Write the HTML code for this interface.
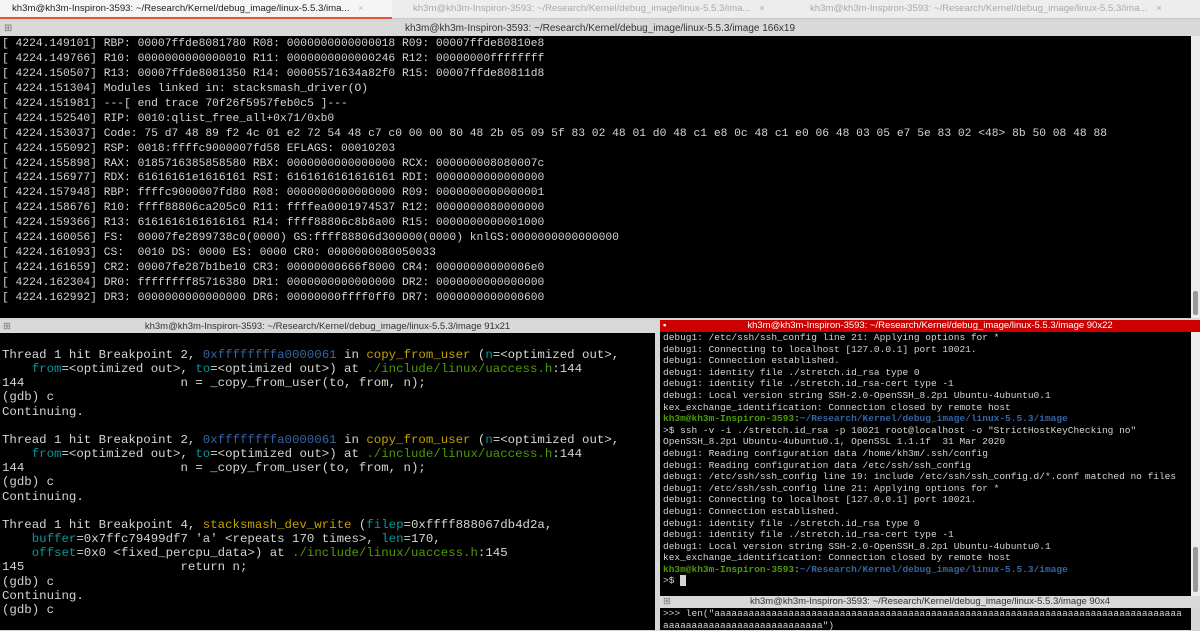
<!DOCTYPE html>
<html><head><meta charset="utf-8"><style>
*{margin:0;padding:0;box-sizing:border-box}
body{width:1200px;height:630px;overflow:hidden;background:#d6d6d6;font-family:"Liberation Sans",sans-serif;position:relative}
.abs{position:absolute}
pre{font-family:"Liberation Mono","DejaVu Sans Mono",monospace;white-space:pre;color:#d3d7cf}
.top div{height:14.95px;line-height:14.95px}
.tabs{left:0;top:0;width:1200px;height:19px;background:#ededed;border-bottom:1px solid #c8c8c8}
.tab{position:absolute;top:0;height:19px;font-size:9.6px;line-height:18px;color:#aaa;white-space:nowrap;overflow:hidden}
.title{font-size:10px;color:#333;text-align:center;line-height:15px;white-space:nowrap}
.b{color:#3465a4}.y{color:#c4a000}.g{color:#4e9a06}.c{color:#06989a}.gb{color:#4e9a06;font-weight:bold}.bb{color:#3465a4;font-weight:bold}
</style></head><body>
<div class="abs tabs">
<div class="tab" style="left:0;width:392px;background:#f5f5f5;color:#222;padding-left:12px;border-bottom:2px solid #e0593a">kh3m@kh3m-Inspiron-3593: ~/Research/Kernel/debug_image/linux-5.5.3/ima... <span style="color:#bbb;margin-left:6px">×</span></div>
<div class="tab" style="left:405px;width:390px;padding-left:8px">kh3m@kh3m-Inspiron-3593: ~/Research/Kernel/debug_image/linux-5.5.3/ima... <span style="margin-left:6px">×</span></div>
<div class="tab" style="left:800px;width:400px;padding-left:10px">kh3m@kh3m-Inspiron-3593: ~/Research/Kernel/debug_image/linux-5.5.3/ima... <span style="margin-left:6px">×</span></div>
</div>
<div class="abs title" style="left:0;top:21px;width:1200px;height:15px;background:#d9d9d9"><span style="position:absolute;left:4px;color:#777">⊞</span>kh3m@kh3m-Inspiron-3593: ~/Research/Kernel/debug_image/linux-5.5.3/image 166x19</div>
<div class="abs" style="left:0;top:36px;width:1191px;height:282px;background:#000"></div>
<div class="abs" style="left:1191px;top:36px;width:9px;height:282px;background:#ececec"><div style="position:absolute;left:2px;top:255px;width:5px;height:24px;background:#999;border-radius:2px"></div></div>
<pre class="abs top" style="left:2px;top:37px;font-size:11.3px"><div>[ 4224.149101] RBP: 00007ffde8081780 R08: 0000000000000018 R09: 00007ffde80810e8</div><div>[ 4224.149766] R10: 0000000000000010 R11: 0000000000000246 R12: 00000000ffffffff</div><div>[ 4224.150507] R13: 00007ffde8081350 R14: 00005571634a82f0 R15: 00007ffde80811d8</div><div>[ 4224.151304] Modules linked in: stacksmash_driver(O)</div><div>[ 4224.151981] ---[ end trace 70f26f5957feb0c5 ]---</div><div>[ 4224.152540] RIP: 0010:qlist_free_all+0x71/0xb0</div><div>[ 4224.153037] Code: 75 d7 48 89 f2 4c 01 e2 72 54 48 c7 c0 00 00 80 48 2b 05 09 5f 83 02 48 01 d0 48 c1 e8 0c 48 c1 e0 06 48 03 05 e7 5e 83 02 &lt;48&gt; 8b 50 08 48 88</div><div>[ 4224.155092] RSP: 0018:ffffc9000007fd58 EFLAGS: 00010203</div><div>[ 4224.155898] RAX: 0185716385858580 RBX: 0000000000000000 RCX: 000000008080007c</div><div>[ 4224.156977] RDX: 61616161e1616161 RSI: 6161616161616161 RDI: 0000000000000000</div><div>[ 4224.157948] RBP: ffffc9000007fd80 R08: 0000000000000000 R09: 0000000000000001</div><div>[ 4224.158676] R10: ffff88806ca205c0 R11: ffffea0001974537 R12: 0000000080000000</div><div>[ 4224.159366] R13: 6161616161616161 R14: ffff88806c8b8a00 R15: 0000000000001000</div><div>[ 4224.160056] FS:  00007fe2899738c0(0000) GS:ffff88806d300000(0000) knlGS:0000000000000000</div><div>[ 4224.161093] CS:  0010 DS: 0000 ES: 0000 CR0: 0000000080050033</div><div>[ 4224.161659] CR2: 00007fe287b1be10 CR3: 00000000666f8000 CR4: 00000000000006e0</div><div>[ 4224.162304] DR0: ffffffff85716380 DR1: 0000000000000000 DR2: 0000000000000000</div><div>[ 4224.162992] DR3: 0000000000000000 DR6: 00000000ffff0ff0 DR7: 0000000000000600</div></pre>
<div class="abs title" style="left:0;top:320px;width:655px;height:13px;background:#d9d9d9;font-size:9.5px;line-height:13px"><span style="position:absolute;left:3px;color:#777">⊞</span>kh3m@kh3m-Inspiron-3593: ~/Research/Kernel/debug_image/linux-5.5.3/image 91x21</div>
<div class="abs" style="left:0;top:333px;width:655px;height:297px;background:#000"></div>
<pre class="abs" style="left:2px;top:348px;font-size:12.4px;line-height:14.15px">Thread 1 hit Breakpoint 2, <span class="b">0xffffffffa0000061</span> in <span class="y">copy_from_user</span> (<span class="c">n</span>=&lt;optimized out&gt;,
    <span class="c">from</span>=&lt;optimized out&gt;, <span class="c">to</span>=&lt;optimized out&gt;) at <span class="g">./include/linux/uaccess.h</span>:144
144                     n = _copy_from_user(to, from, n);
(gdb) c
Continuing.

Thread 1 hit Breakpoint 2, <span class="b">0xffffffffa0000061</span> in <span class="y">copy_from_user</span> (<span class="c">n</span>=&lt;optimized out&gt;,
    <span class="c">from</span>=&lt;optimized out&gt;, <span class="c">to</span>=&lt;optimized out&gt;) at <span class="g">./include/linux/uaccess.h</span>:144
144                     n = _copy_from_user(to, from, n);
(gdb) c
Continuing.

Thread 1 hit Breakpoint 4, <span class="y">stacksmash_dev_write</span> (<span class="c">filep</span>=0xffff888067db4d2a,
    <span class="c">buffer</span>=0x7ffc79499df7 'a' &lt;repeats 170 times&gt;, <span class="c">len</span>=170,
    <span class="c">offset</span>=0x0 &lt;fixed_percpu_data&gt;) at <span class="g">./include/linux/uaccess.h</span>:145
145                     return n;
(gdb) c
Continuing.
(gdb) c</pre>
<div class="abs title" style="left:660px;top:320px;width:540px;height:12px;background:#cc0000;color:#fff;font-size:9.5px;line-height:12px"><span style="position:absolute;left:3px">▪</span>kh3m@kh3m-Inspiron-3593: ~/Research/Kernel/debug_image/linux-5.5.3/image 90x22</div>
<div class="abs" style="left:660px;top:332px;width:531px;height:264px;background:#000"></div>
<div class="abs" style="left:1191px;top:332px;width:9px;height:264px;background:#ececec"><div style="position:absolute;left:2px;top:215px;width:5px;height:45px;background:#999;border-radius:2px"></div></div>
<pre class="abs" style="left:663px;top:332px;font-size:9.5px;line-height:11.6px">debug1: /etc/ssh/ssh_config line 21: Applying options for *
debug1: Connecting to localhost [127.0.0.1] port 10021.
debug1: Connection established.
debug1: identity file ./stretch.id_rsa type 0
debug1: identity file ./stretch.id_rsa-cert type -1
debug1: Local version string SSH-2.0-OpenSSH_8.2p1 Ubuntu-4ubuntu0.1
kex_exchange_identification: Connection closed by remote host
<span class="gb">kh3m@kh3m-Inspiron-3593</span>:<span class="bb">~/Research/Kernel/debug_image/linux-5.5.3/image</span>
&gt;$ ssh -v -i ./stretch.id_rsa -p 10021 root@localhost -o "StrictHostKeyChecking no"
OpenSSH_8.2p1 Ubuntu-4ubuntu0.1, OpenSSL 1.1.1f  31 Mar 2020
debug1: Reading configuration data /home/kh3m/.ssh/config
debug1: Reading configuration data /etc/ssh/ssh_config
debug1: /etc/ssh/ssh_config line 19: include /etc/ssh/ssh_config.d/*.conf matched no files
debug1: /etc/ssh/ssh_config line 21: Applying options for *
debug1: Connecting to localhost [127.0.0.1] port 10021.
debug1: Connection established.
debug1: identity file ./stretch.id_rsa type 0
debug1: identity file ./stretch.id_rsa-cert type -1
debug1: Local version string SSH-2.0-OpenSSH_8.2p1 Ubuntu-4ubuntu0.1
kex_exchange_identification: Connection closed by remote host
<span class="gb">kh3m@kh3m-Inspiron-3593</span>:<span class="bb">~/Research/Kernel/debug_image/linux-5.5.3/image</span>
&gt;$ <span style="background:#d3d7cf">&nbsp;</span></pre>
<div class="abs title" style="left:660px;top:596px;width:540px;height:12px;background:#d9d9d9;font-size:9.5px;line-height:12px"><span style="position:absolute;left:3px;color:#777">⊞</span>kh3m@kh3m-Inspiron-3593: ~/Research/Kernel/debug_image/linux-5.5.3/image 90x4</div>
<div class="abs" style="left:660px;top:608px;width:531px;height:22px;background:#000"></div>
<pre class="abs" style="left:663px;top:608px;font-size:9.5px;line-height:11.6px">&gt;&gt;&gt; len("aaaaaaaaaaaaaaaaaaaaaaaaaaaaaaaaaaaaaaaaaaaaaaaaaaaaaaaaaaaaaaaaaaaaaaaaaaaaaaaaaa
aaaaaaaaaaaaaaaaaaaaaaaaaaaa")</pre>
</body></html>
